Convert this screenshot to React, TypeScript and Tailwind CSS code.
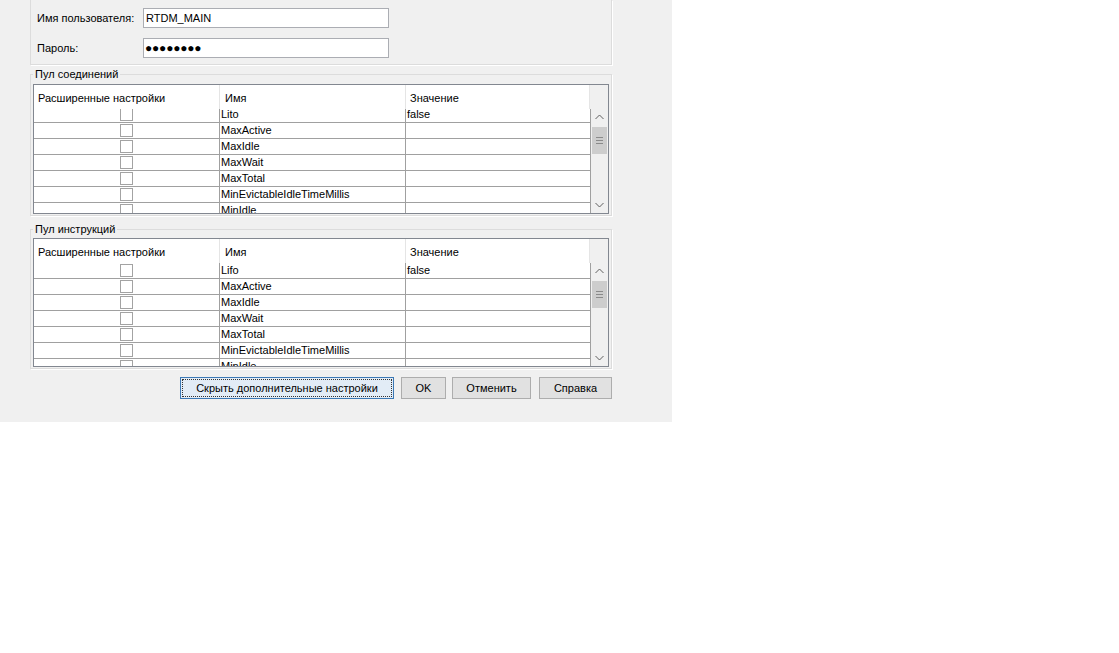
import React from 'react';

const ROWS = [
  { name: 'Lifo', value: 'false' },
  { name: 'MaxActive', value: '' },
  { name: 'MaxIdle', value: '' },
  { name: 'MaxWait', value: '' },
  { name: 'MaxTotal', value: '' },
  { name: 'MinEvictableIdleTimeMillis', value: '' },
  { name: 'MinIdle', value: '' },
];

function Chevron({ up }: { up?: boolean }) {
  return (
    <svg width="17" height="17" viewBox="0 0 17 17">
      <polyline
        points={up ? '4.5,10 8.5,6 12.5,10' : '4.5,7 8.5,11 12.5,7'}
        fill="none"
        stroke="#606060"
        strokeWidth="1"
      />
    </svg>
  );
}

function ScrollBar() {
  return (
    <div className="w-[17px] h-full bg-[#f0f0f0] flex flex-col">
      <div className="h-[17px] flex items-center justify-center">
        <Chevron up />
      </div>
      <div className="flex-1 flex flex-col">
        <div className="h-[1px]" />
        <div className="h-[27px] mx-[1px] bg-[#cdcdcd] flex flex-col items-center justify-center gap-[2px]">
          <div className="w-[7px] h-[1px] bg-[#8a8a8a]" />
          <div className="w-[7px] h-[1px] bg-[#8a8a8a]" />
          <div className="w-[7px] h-[1px] bg-[#8a8a8a]" />
        </div>
      </div>
      <div className="h-[17px] flex items-center justify-center">
        <Chevron />
      </div>
    </div>
  );
}

function PoolTable({ offset, first, height }: { offset: boolean; first: string; height: string }) {
  const rows = ROWS.map((r, i) => (i === 0 ? { ...r, name: first } : r));
  return (
    <div className={`ml-[2px] w-[576px] ${height} border border-[#828790] bg-white flex flex-col`}>
      <div className="h-[24px] flex shrink-0">
        <div className="w-[186px] border-r border-[#e5e5e5] flex items-center pl-[4px] pt-[2px]">Расширенные настройки</div>
        <div className="w-[186px] border-r border-[#e5e5e5] flex items-center pl-[5px] pt-[2px]">Имя</div>
        <div className="w-[184px] border-r border-[#e5e5e5] flex items-center pl-[4px] pt-[2px]">Значение</div>
        <div className="flex-1 bg-[#f0f0f0]" />
      </div>
      <div className="flex-1 flex overflow-hidden">
        <div className="w-[558px] overflow-hidden border-r border-[#a0a0a0]">
          <div className={offset ? '-mt-[2px]' : ''}>
            {rows.map((r) => (
              <div key={r.name} className="h-[16px] flex border-b border-[#a0a0a0]">
                <div className="w-[186px] border-r border-[#a0a0a0] flex items-center justify-center">
                  <div className="w-[13px] h-[13px] border border-[#a3a3a3] bg-white" />
                </div>
                <div className="w-[186px] border-r border-[#a0a0a0] pl-[1px] leading-[15px]">{r.name}</div>
                <div className="flex-1 pl-[1px] leading-[15px]">{r.value}</div>
              </div>
            ))}
          </div>
        </div>
        <ScrollBar />
      </div>
    </div>
  );
}

function Button({ children, w, focused }: { children: React.ReactNode; w: string; focused?: boolean }) {
  return (
    <button
      className={`${w} h-[22px] border ${
        focused ? 'border-[#3c78b4] bg-[#e2ecf6] p-[1px]' : 'border-[#adadad] bg-[#e1e1e1]'
      } flex items-stretch`}
    >
      <span
        className={`flex-1 flex items-center justify-center ${
          focused ? 'border border-dotted border-[#333]' : ''
        }`}
      >
        {children}
      </span>
    </button>
  );
}

export default function App() {
  return (
    <div
      className="w-[1119px] h-[653px] bg-white text-[11px] text-black"
      style={{ fontFamily: '"Liberation Sans", Arial, sans-serif' }}
    >
      <div className="w-[672px] h-[422px] bg-[#f0f0f0] pl-[30px] flex flex-col">
        {/* connection group */}
        <div className="w-[582px] h-[65px] border-x border-b border-[#dcdcdc] shadow-[1px_1px_0_#fff] pl-[6px] pt-[8px] flex flex-col gap-[10px]">
          <div className="flex items-center h-[20px]">
            <span className="w-[106px]">Имя пользователя:</span>
            <div className="w-[246px] h-[20px] border border-[#abadb3] bg-white flex items-center pl-[2px]">RTDM_MAIN</div>
          </div>
          <div className="flex items-center h-[20px]">
            <span className="w-[106px]">Пароль:</span>
            <div className="w-[246px] h-[20px] border border-[#abadb3] bg-white flex items-center pl-[1px] text-[12px] tracking-[-0.2px]">
              ●●●●●●●●
            </div>
          </div>
        </div>

        <fieldset className="mt-[2px] w-[582px] border border-[#dcdcdc] shadow-[1px_1px_0_#fff] pt-[3px] pb-[1px]">
          <legend className="ml-[2px] px-[2px] leading-[14px]">Пул соединений</legend>
          <PoolTable offset first="Lito" height="h-[130px]" />
        </fieldset>

        <fieldset className="mt-[6px] w-[582px] border border-[#dcdcdc] shadow-[1px_1px_0_#fff] pt-[2px] pb-[1px]">
          <legend className="ml-[2px] px-[2px] leading-[14px]">Пул инструкций</legend>
          <PoolTable offset={false} first="Lifo" height="h-[129px]" />
        </fieldset>

        <div className="mt-[8px] pl-[150px] flex">
          <Button w="w-[214px]" focused>Скрыть дополнительные настройки</Button>
          <div className="ml-[7px]">
            <Button w="w-[45px]">OK</Button>
          </div>
          <div className="ml-[6px]">
            <Button w="w-[79px]">Отменить</Button>
          </div>
          <div className="ml-[8px]">
            <Button w="w-[73px]">Справка</Button>
          </div>
        </div>
      </div>
    </div>
  );
}
